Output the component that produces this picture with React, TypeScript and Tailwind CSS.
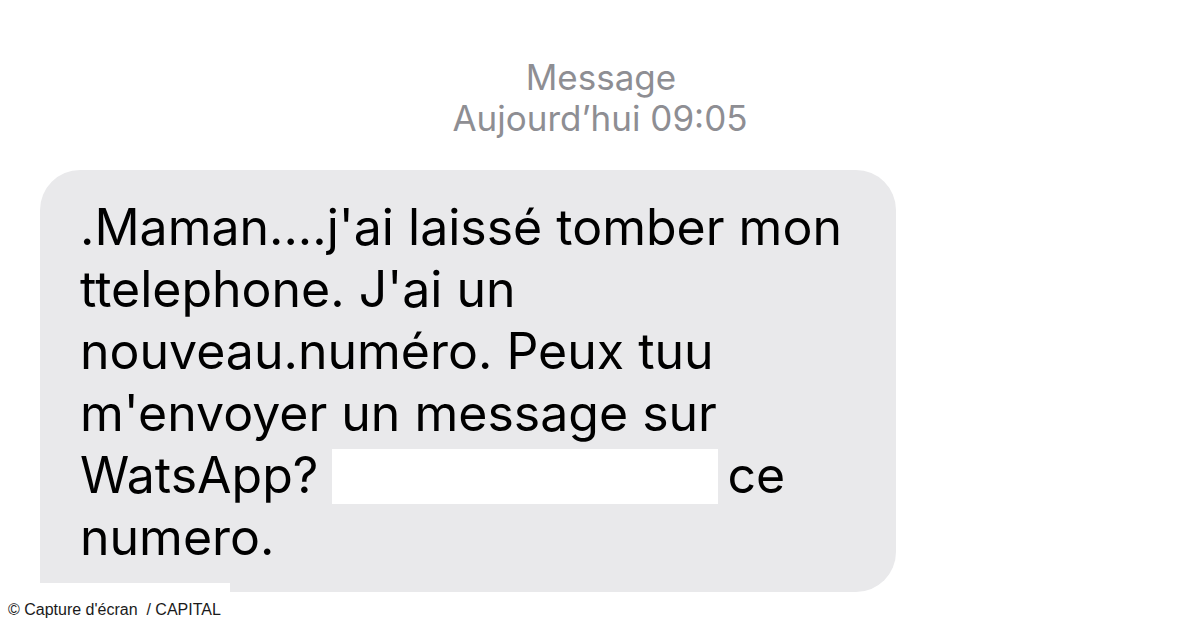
export default function App() {
  return (
    <div className="relative w-[1200px] h-[630px] overflow-hidden bg-white" style={{ fontFamily: 'Inter, "Liberation Sans", sans-serif' }}>
      <div className="pt-[57px] flex flex-col items-center text-[35px] leading-[41px] text-[#8e8e93]">
        <div className="pl-[2px]">Message</div>
        <div>Aujourd’hui 09:05</div>
      </div>

      <div className="mt-[31px] ml-[40px] w-[856px] h-[422px] rounded-[40px] rounded-bl-none bg-[#e9e9eb] pl-[40px] pt-[26px] text-[50px] leading-[62px] text-black">
        .Maman....j'ai laissé tomber mon
        <br />
        ttelephone. J'ai un
        <br />
        nouveau.numéro. Peux tuu
        <br />
        m'envoyer un message sur
        <br />
        WatsApp?{' '}
        <span className="inline-block align-middle w-[386px] h-[55px] bg-white -mr-[5px] -mt-[6px]"></span>{' '}
        ce
        <br />
        numero.
      </div>

      <div
        className="absolute left-0 bottom-0 w-[230px] h-[47px] bg-white pl-[8px] pt-[17px] text-[16px] leading-[20px] text-[#1a1a1a]"
        style={{ fontFamily: '"Liberation Sans", Arial, sans-serif' }}
      >
        © Capture d'écran&nbsp; / CAPITAL
      </div>
    </div>
  );
}
